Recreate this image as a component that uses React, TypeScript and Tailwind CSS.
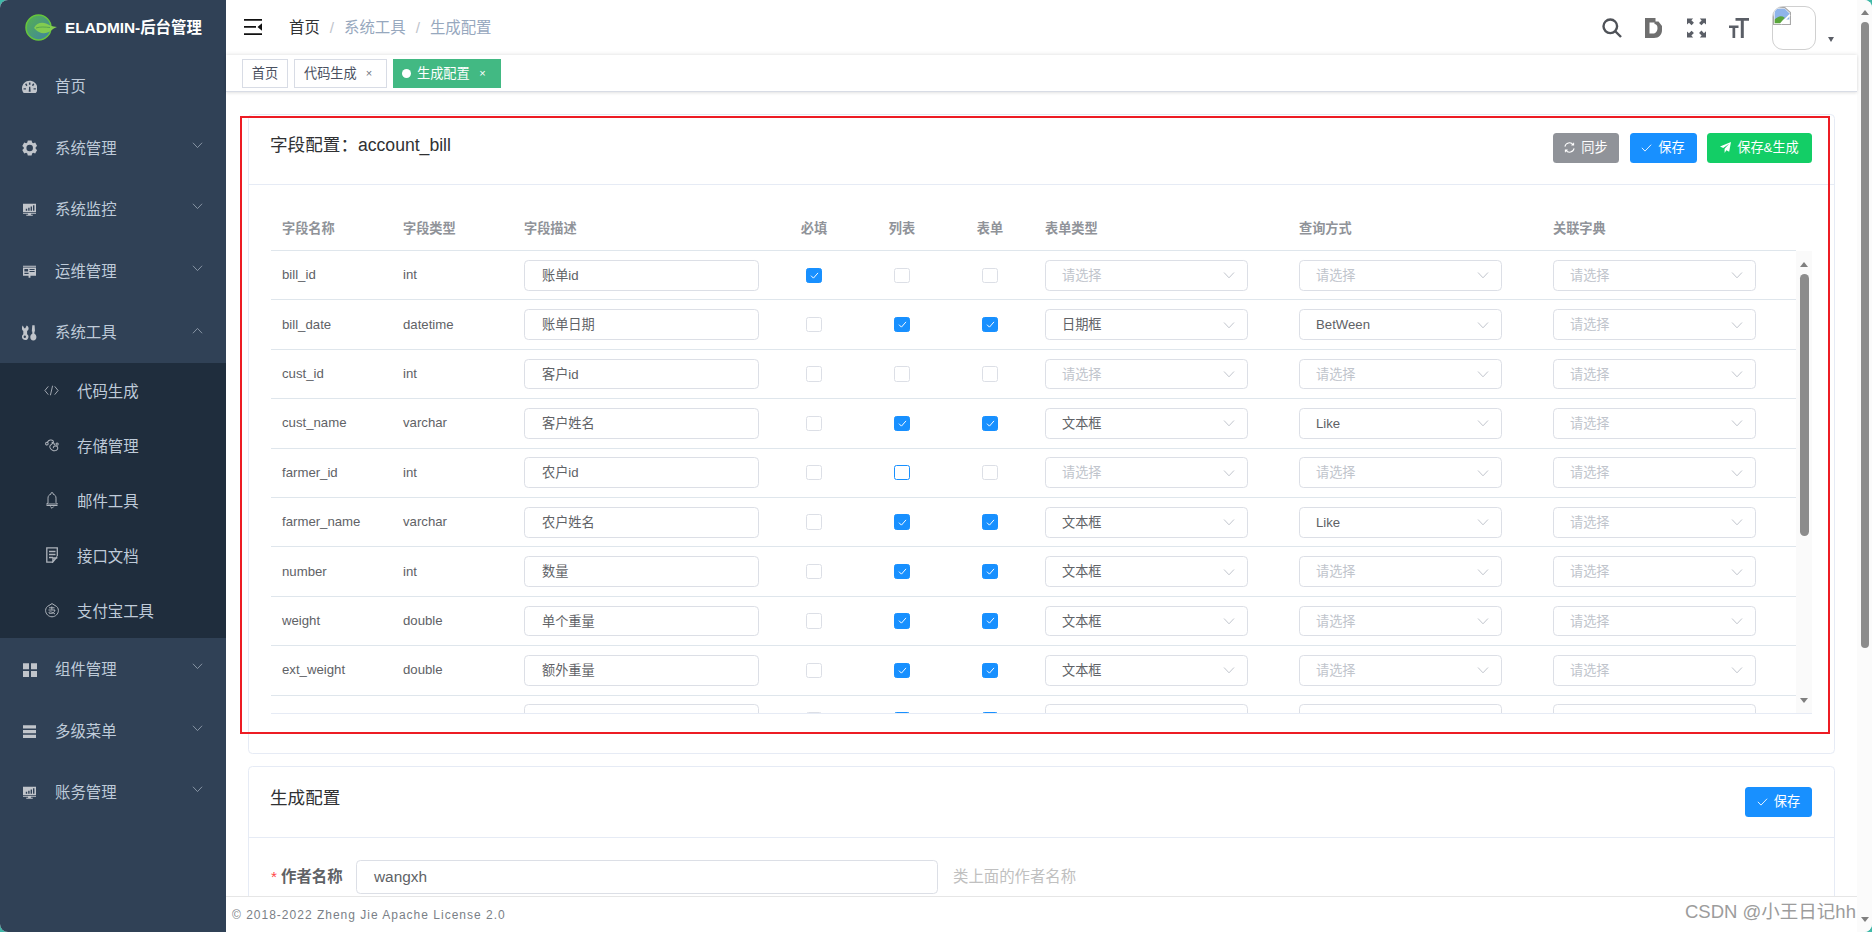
import React from 'react';

interface Field {
  name: string;
  type: string;
  desc: string;
  required?: boolean;
  list?: boolean;
  form?: boolean;
  focus?: boolean;
  formType?: string;
  query?: string;
}

const fields: Field[] = [
  { name: 'bill_id', type: 'int', desc: '账单id', required: true },
  { name: 'bill_date', type: 'datetime', desc: '账单日期', list: true, form: true, formType: '日期框', query: 'BetWeen' },
  { name: 'cust_id', type: 'int', desc: '客户id' },
  { name: 'cust_name', type: 'varchar', desc: '客户姓名', list: true, form: true, formType: '文本框', query: 'Like' },
  { name: 'farmer_id', type: 'int', desc: '农户id', focus: true },
  { name: 'farmer_name', type: 'varchar', desc: '农户姓名', list: true, form: true, formType: '文本框', query: 'Like' },
  { name: 'number', type: 'int', desc: '数量', list: true, form: true, formType: '文本框' },
  { name: 'weight', type: 'double', desc: '单个重量', list: true, form: true, formType: '文本框' },
  { name: 'ext_weight', type: 'double', desc: '额外重量', list: true, form: true, formType: '文本框' },
  // last row is cut by the scroll area, only the top of its controls shows
  { name: '', type: '', desc: '', list: true, form: true, formType: ' ', query: ' ' },
];

const Chevron = ({ up = false, className = '' }: { up?: boolean; className?: string }) => (
  <svg viewBox="0 0 12 7" fill="none" stroke="currentColor" strokeWidth="1" className={className}>
    <path d={up ? 'M1 6.5 6 1.2l5 5.3' : 'M1 .5l5 5.3L11 .5'} />
  </svg>
);

const IconDashboard = () => (
  <svg viewBox="0 0 16 14" className="w-[15.4px] h-[14px]" fill="currentColor">
    <path fillRule="evenodd" d="M8 .5C3.6.5 0 4 0 8.4c0 1.9.6 3.6 1.5 4.6.2.2.4.3.7.3h11.6c.3 0 .5-.1.7-.3 1-1 1.5-2.7 1.5-4.6C16 4 12.4.5 8 .5zM7.2 2.2h1.6v2.4H7.2zM3.2 4.2l1.2-1 1.3 1.9-1.2 1zM1.6 8.2h2.5v1.5H1.6zM12 8.2h2.4v1.5H12zM7 12l.4-5.2h1.2L9 12zM10.3 5.1l1.3-1.9 1.2 1-1.3 1.9z" />
  </svg>
);
const IconGear = () => (
  <svg viewBox="0 0 16 16" className="w-[15.4px] h-[16px]" fill="currentColor">
    <path fillRule="evenodd" d="M6 .3h4l.5 2 1.2.7 2-.6 2 3.4-1.5 1.5v1.4l1.5 1.5-2 3.4-2-.6-1.2.7-.5 2H6l-.5-2-1.2-.7-2 .6-2-3.4 1.5-1.5V7.2L.3 5.8l2-3.4 2 .6L5.500 2.300zM8 4.600a3.400 3.400 0 1 0 0 6.800 3.400 3.400 0 0 0 0-6.800z" />
  </svg>
);
const IconMonitor = () => (
  <svg viewBox="0 0 14 14" className="w-[13px] h-[13.500px]" fill="currentColor">
    <path fillRule="evenodd" d="M0 .5h14v9.300H0zM3 6h1.500v2H3zM5.600 4.800h1.500V8H5.600zM8.200 3.500h1.500V8H8.200zM10.800 2.200h1.500V8h-1.500z" />
    <path d="M0 10.500h14v.7H0zM5.500 11.200h3v1.200h-3zM3.500 12.500h7v1h-7z" />
  </svg>
);
const IconConsole = () => (
  <svg viewBox="0 0 14 14" className="w-[13px] h-[13.500px]" fill="currentColor">
    <path fillRule="evenodd" d="M0 .5h14v1H0zM0 2.500h14v8.700H8v2.300H6v-2.300H0zM1.500 4v2.800h4V4zM7 4v1h5.500V4zM7 6.200v1h5.500v-1zM1.500 8v1.500H6V8z" />
  </svg>
);
const IconTools = () => (
  <svg viewBox="0 0 15 16" className="w-[15px] h-[16px]" fill="currentColor">
    <path d="M.8.500 2.200 3.200 3.300 3.200 4.700.500c1.200.7 1.900 1.800 1.900 3 0 1.100-.6 2-1.500 2.500v3.200c.9.500 1.400 1.400 1.400 2.500 0 1.900-1.500 3.400-3.300 3.400S-.1 13.600-.1 11.700c0-1.100.6-2 1.400-2.500V6C.4 5.500-.1 4.600-.1 3.500c0-1.200.3-2.300.9-3zM2.800 10.600a1.200 1.200 0 1 0 0 2.400 1.200 1.200 0 0 0 0-2.400z" />
    <path d="M10.300.300h2.300l.4 6.200h-.6v2.200c1.200.6 2 1.800 2 3.200 0 2.100-1.200 3.600-3.100 3.600s-3-1.500-3-3.600c0-1.400.8-2.600 2-3.200V6.500h-.5z" />
  </svg>
);
const IconComponents = () => (
  <svg viewBox="0 0 14 14" className="w-[14px] h-[14px]" fill="currentColor">
    <path d="M0 .3h6v6H0zM8 .3h6v6H8zM0 8h6v6H0zM8 8h6v6H8z" />
  </svg>
);
const IconMenu = () => (
  <svg viewBox="0 0 14 14" className="w-[13px] h-[13.500px]" fill="currentColor">
    <path d="M0 0h14v3.400H0zM0 5.100h14v3.400H0zM0 10.200h14v3.400H0z" />
  </svg>
);
const IconCode = () => (
  <svg viewBox="0 0 16 12" className="w-[15px] h-[11px]" fill="none" stroke="currentColor" strokeWidth="1">
    <path d="M4.500 1.500.8 6l3.700 4.500M11.500 1.500 15.200 6l-3.700 4.500M9.200.8 6.800 11.200" />
  </svg>
);
const IconStorage = () => (
  <svg viewBox="0 0 15 14" className="w-[14px] h-[13px]" fill="none" stroke="currentColor" strokeWidth="1.100">
    <path d="M2.500 3.500C4 1 7 .3 8.500 1.800S8 5 6.500 6 4.500 8.500 6 10.500s4.500 3 6.500 1.500 1.500-4-.5-4.500-3.500 1-3 2.500" />
    <path d="M7 3.500c1.500 0 3 1 3.200 3" />
    <circle cx="2" cy="5" r="1.400" />
    <circle cx="13" cy="5.500" r="1.200" />
  </svg>
);
const IconBell = () => (
  <svg viewBox="0 0 12 17" className="w-[12px] h-[17px]" fill="none" stroke="currentColor" strokeWidth="1">
    <path d="M6 .5a1 1 0 0 1 1 1v.6c1.900.5 3 2 3 4v4.400l1.500 1.500H.5L2 11.100V6.100c0-2 1.100-3.500 3-4v-.6a1 1 0 0 1 1-1zM.5 13.500h11M4.200 14.500 6 16.300l1.800-1.800" />
  </svg>
);
const IconDoc = () => (
  <svg viewBox="0 0 12 16" className="w-[12px] h-[16px]" fill="none" stroke="currentColor" strokeWidth="1.300">
    <path d="M11.300 9V.8H.8v14.400h5.500M3 4.500h6.500M3 7.500h6.500M3 10.500h4M11.300 9.500 6.800 15l.2-4h4.300" />
  </svg>
);
const IconAlipay = () => (
  <svg viewBox="0 0 14 15" className="w-[14px] h-[15px]" fill="none" stroke="currentColor" strokeWidth="1">
    <path d="M7 .6 10 2.500c2.200.9 3.400 2.800 3.400 5 0 3.300-2.900 6.300-6.400 6.300S.6 10.800.6 7.500c0-2.200 1.200-4.100 3.400-5z" />
    <path d="M4 4.800h5.500M6.800 3.500v3.200M3.500 7h6.500c-.5 2-2 3.500-3.500 3.500S3.500 10.500 4 9.500s2.500-1 6 1.500" />
  </svg>
);

const MenuItem = ({
  icon,
  label,
  arrow,
  up,
}: {
  icon: React.ReactNode;
  label: string;
  arrow?: boolean;
  up?: boolean;
}) => (
  <div className="flex items-center h-[61.6px] pt-[2px] pl-[22px] text-[15.4px] text-[#bfcbd9]">
    <span className="w-[15.4px] flex justify-center text-[#c1c5cb] shrink-0">{icon}</span>
    <span className="ml-[17.6px] leading-none">{label}</span>
    {arrow && <Chevron up={up} className="w-[11px] h-[7px] ml-auto mr-[23px] -translate-y-[3px] text-[#8e9bab]" />}
  </div>
);

const SubItem = ({ icon, label }: { icon: React.ReactNode; label: string }) => (
  <div className="flex items-center h-[55px] pt-[2px] pl-[44px] text-[15.4px] text-[#bfcbd9]">
    <span className="w-[15px] flex justify-center text-[#aeb4bc] shrink-0 -translate-y-[1px]">{icon}</span>
    <span className="ml-[18px] leading-none">{label}</span>
  </div>
);

const Sidebar = () => (
  <aside className="w-[226px] shrink-0 bg-[#304156]">
    <div className="h-[55px] flex items-center pl-[25px]">
      <svg viewBox="0 0 32 27" className="w-[32px] h-[27px] shrink-0">
        <defs>
          <linearGradient id="logoFill" x1="0" y1="0" x2="1" y2="1">
            <stop offset="0" stopColor="#55b44a" />
            <stop offset="1" stopColor="#3f7fa8" />
          </linearGradient>
        </defs>
        <circle cx="13.500" cy="13.500" r="12.500" fill="url(#logoFill)" stroke="#66c63c" strokeWidth="1.500" />
        <path d="M9 14c2-5 8-6.500 12-4.500 3 1.500 6 3 11 3.500-2.500 1-4 2-6 3.500-3.500 3-8.500 3.500-12 1.500-2-1-3.500-2.500-5-4z" fill="#82cc50" />
        <path d="M11 14c4-1.500 9-1 14-.5" stroke="#4a9a4f" strokeWidth=".8" fill="none" />
      </svg>
      <span className="ml-[8px] text-[15.4px] font-semibold text-white whitespace-nowrap">ELADMIN-后台管理</span>
    </div>
    <MenuItem icon={<IconDashboard />} label="首页" />
    <MenuItem icon={<IconGear />} label="系统管理" arrow />
    <MenuItem icon={<IconMonitor />} label="系统监控" arrow />
    <MenuItem icon={<IconConsole />} label="运维管理" arrow />
    <MenuItem icon={<IconTools />} label="系统工具" arrow up />
    <div className="bg-[#1f2d3d]">
      <SubItem icon={<IconCode />} label="代码生成" />
      <SubItem icon={<IconStorage />} label="存储管理" />
      <SubItem icon={<IconBell />} label="邮件工具" />
      <SubItem icon={<IconDoc />} label="接口文档" />
      <SubItem icon={<IconAlipay />} label="支付宝工具" />
    </div>
    <MenuItem icon={<IconComponents />} label="组件管理" arrow />
    <MenuItem icon={<IconMenu />} label="多级菜单" arrow />
    <MenuItem icon={<IconMonitor />} label="账务管理" arrow />
  </aside>
);

const Navbar = () => (
  <header className="h-[55px] shrink-0 flex items-center text-[#5a5e66] bg-white">
    <svg viewBox="0 0 18 16" className="w-[18px] h-[16px] ml-[18px] -translate-y-[1px] text-[#111]" fill="currentColor">
      <path d="M0 0h18v1.700H0zM0 7.100h12v1.700H0zM0 14.300h18V16H0zM18 4.300v7.400L13.500 8z" />
    </svg>
    <nav className="ml-[27px] flex items-center text-[15.4px] leading-none">
      <span className="text-[#303133]">首页</span>
      <span className="mx-[10px] text-[#c0c4cc]">/</span>
      <span className="text-[#97a8be]">系统工具</span>
      <span className="mx-[10px] text-[#c0c4cc]">/</span>
      <span className="text-[#97a8be]">生成配置</span>
    </nav>
    <div className="ml-auto flex items-center mr-[23px]">
      <svg viewBox="0 0 20 20" className="w-[20px] h-[20px]" fill="none" stroke="#4f5258" strokeWidth="2.400">
        <circle cx="8.300" cy="8.300" r="6.800" />
        <path d="m13.500 13.500 5.500 5.500" />
      </svg>
      <svg viewBox="0 0 17 20" className="w-[17px] h-[20px] ml-[23px]" fill="#6f6f6f">
        <path fillRule="evenodd" d="M0 0h10.500v3.500h3l3.500 4.500v4c0 4.500-3 8-8 8H0zM4.500 4.500v11H8c2.500 0 4.500-2 4.500-5.500 0-3-1.500-4-3-4V4.500z" />
      </svg>
      <svg viewBox="0 0 20 20" className="w-[19px] h-[20px] ml-[25px]" fill="#5a5e66">
        <path d="M0 0h6.500L4.600 1.900l2.700 2.700-2.500 2.500-2.700-2.700L0 6.400zM20 0v6.400l-2.100-1.900-2.700 2.700-2.500-2.500 2.700-2.700L13.500 0zM0 20v-6.400l2.100 1.900 2.700-2.700 2.500 2.500-2.700 2.700L6.500 20zM20 20h-6.500l1.900-2.100-2.700-2.700 2.500-2.500 2.700 2.700 2.100-1.900z" />
      </svg>
      <svg viewBox="0 0 20 20" className="w-[20px] h-[20px] ml-[23px]" fill="#5a5e66">
        <path d="M6.500 0H20v2.800h-5.200V20h-3V2.800H6.500zM0 7.500h9.500V10H6.200v10H3.500V10H0z" />
      </svg>
      <div className="relative w-[44px] h-[44px] ml-[23px] rounded-[11px] border border-[#d0d0d0] overflow-hidden">
        <svg viewBox="0 0 16 16" className="w-[18px] h-[18px]">
          <path d="M.5.500h10L15.500 5v10.500H.5z" fill="#fff" stroke="#a8a8a8" />
          <path d="M1.500 1.500h9l4 4V11H1.500z" fill="#8fb4ea" />
          <path d="M1.500 14.500V11c3-3 6-3.500 9-1.500l-4 5z" fill="#5aa63c" />
          <path d="M15 7 7 15" stroke="#fff" strokeWidth="1.500" />
        </svg>
      </div>
      <span className="w-0 h-0 ml-[12px] mt-[24px] border-x-[3.500px] border-x-transparent border-t-[5px] border-t-[#5a5e66]" />
    </div>
  </header>
);

const TagsView = () => (
  <div className="h-[37px] shrink-0 relative z-10 flex items-start pt-[4px] pl-[16px] gap-[5.500px] border-b border-[#d8dce5] shadow-[0_1px_3px_0_rgba(0,0,0,0.12),0_-2px_3px_0_rgba(0,0,0,0.05)] bg-white text-[13.2px] leading-none">
    <div className="h-[29px] w-[46px] flex items-center justify-center border border-[#d8dce5] text-[#495060]">首页</div>
    <div className="h-[29px] w-[93px] flex items-center pl-[9.500px] border border-[#d8dce5] text-[#495060]">
      代码生成
      <span className="ml-[9px] text-[11px] text-[#70757f]">×</span>
    </div>
    <div className="h-[29px] w-[108px] ml-[1px] flex items-center pl-[9px] bg-[#42b983] text-white">
      <span className="w-[9px] h-[9px] rounded-full bg-white mr-[6px]" />
      生成配置
      <span className="ml-[9.500px] text-[11px]">×</span>
    </div>
  </div>
);

const TextBox = ({ value }: { value: string }) => (
  <div className="w-[235px] h-[30.800px] flex items-center pl-[17px] pt-[1px] border border-[#dcdfe6] rounded-[4.400px] text-[13.2px] text-[#606266] bg-white">
    {value}
  </div>
);

const Select = ({ value }: { value?: string }) => (
  <div className="w-[203px] h-[30.800px] flex items-center pl-[16px] pt-[1px] pr-[12px] border border-[#dcdfe6] rounded-[4.400px] text-[13.2px] bg-white">
    <span className={value ? 'text-[#606266]' : 'text-[#c0c4cc]'}>{value || '请选择'}</span>
    <Chevron className="ml-auto w-[12px] h-[7px] text-[#c0c4cc]" />
  </div>
);

const CheckBox = ({ checked, focus }: { checked?: boolean; focus?: boolean }) => (
  <span
    className={`w-[16px] h-[15.400px] rounded-[2.500px] border flex items-center justify-center ${
      checked ? 'bg-[#1890ff] border-[#1890ff]' : focus ? 'bg-white border-[#1890ff]' : 'bg-white border-[#dcdfe6]'
    }`}
  >
    {checked && (
      <svg viewBox="0 0 10 8" className="w-[9px] h-[7px]" fill="none" stroke="#fff" strokeWidth="1.100">
        <path d="M1 4.200 3.800 7 9 1" />
      </svg>
    )}
  </span>
);

const COLS = 'grid grid-cols-[121px_121px_257px_88px_88px_88px_254px_254px_255px] items-center';

const FieldRow = ({ f }: { f: Field }) => (
  <div className={`${COLS} h-[49.400px] shrink-0 border-b border-[#dfe6ec] text-[13.2px] text-[#606266]`}>
    <span className="pl-[11px]">{f.name}</span>
    <span className="pl-[11px]">{f.type}</span>
    <div className="pl-[11px]"><TextBox value={f.desc} /></div>
    <div className="flex justify-center"><CheckBox checked={f.required} /></div>
    <div className="flex justify-center"><CheckBox checked={f.list} focus={f.focus} /></div>
    <div className="flex justify-center"><CheckBox checked={f.form} /></div>
    <div className="pl-[11px]"><Select value={f.formType} /></div>
    <div className="pl-[11px]"><Select value={f.query} /></div>
    <div className="pl-[11px]"><Select value={f.name ? undefined : ' '} /></div>
  </div>
);

const FieldTable = () => (
  <div className="w-[1541px]">
    <div className={`${COLS} w-[1525px] h-[44px] border-b border-[#dfe6ec] text-[13.2px] font-semibold text-[#909399]`}>
      <span className="pl-[11px]">字段名称</span>
      <span className="pl-[11px]">字段类型</span>
      <span className="pl-[11px]">字段描述</span>
      <span className="text-center">必填</span>
      <span className="text-center">列表</span>
      <span className="text-center">表单</span>
      <span className="pl-[11px]">表单类型</span>
      <span className="pl-[11px]">查询方式</span>
      <span className="pl-[11px]">关联字典</span>
    </div>
    <div className="h-[463px] flex border-b border-[#e6ebf5] overflow-hidden">
      <div className="w-[1525px] shrink-0">
        {fields.map((f, i) => (
          <FieldRow key={i} f={f} />
        ))}
      </div>
      <div className="w-[16px] shrink-0 bg-[#fafafa] flex flex-col items-center pt-[11px] pb-[10px]">
        <span className="w-0 h-0 border-x-[4px] border-x-transparent border-b-[5px] border-b-[#7f7f7f]" />
        <span className="w-[9px] h-[262px] mt-[7px] rounded-full bg-[#8c8c8c]" />
        <span className="w-0 h-0 mt-auto border-x-[4px] border-x-transparent border-t-[5px] border-t-[#7f7f7f]" />
      </div>
    </div>
  </div>
);

const Button = ({
  icon,
  label,
  color,
  width,
}: {
  icon: React.ReactNode;
  label: string;
  color: string;
  width: string;
}) => (
  <div className={`h-[30px] rounded-[3.500px] flex items-center justify-center gap-[6px] text-[13.2px] leading-none text-white ${color} ${width}`}>
    {icon}
    {label}
  </div>
);

const CheckIcon = () => (
  <svg viewBox="0 0 12 9" className="w-[11px] h-[8px]" fill="none" stroke="#fff" strokeWidth="1">
    <path d="M.8 4.300 4.300 8 11.200 .8" />
  </svg>
);
const RefreshIcon = () => (
  <svg viewBox="0 0 12 12" className="w-[11px] h-[11px]" fill="none" stroke="#fff" strokeWidth="1.100">
    <path d="M1 5A5 5 0 0 1 10 3M11 7A5 5 0 0 1 2 9M10.500 .8V3.300H8M1.500 11.200V8.700H4" />
  </svg>
);
const SendIcon = () => (
  <svg viewBox="0 0 12 12" className="w-[11px] h-[11px]" fill="#fff">
    <path d="M12 0 0 5l3.500 1.600L10 2 5 7.400V12l2-3 3 1.500z" />
  </svg>
);

const FieldCard = () => (
  <section className="h-[640px] shrink-0 border border-[#e6ebf5] rounded-[4.400px] bg-white">
    <div className="h-[70px] flex items-center justify-between pl-[21px] pr-[22px] border-b border-[#e6ebf5]">
      <span className="text-[17.6px] leading-none text-[#303133] -translate-y-[4px]">字段配置：account_bill</span>
      <div className="flex gap-[10.500px] -translate-y-[2px]">
        <Button icon={<RefreshIcon />} label="同步" color="bg-[#909399]" width="w-[66px]" />
        <Button icon={<CheckIcon />} label="保存" color="bg-[#1890ff]" width="w-[67px]" />
        <Button icon={<SendIcon />} label="保存&生成" color="bg-[#13ce66]" width="w-[105px]" />
      </div>
    </div>
    <div className="px-[22px] pt-[22px]">
      <FieldTable />
    </div>
  </section>
);

const GenCard = () => (
  <section className="mt-[12px] h-[300px] shrink-0 border border-[#e6ebf5] rounded-[4.400px] bg-white">
    <div className="h-[71px] flex items-center justify-between pl-[21px] pr-[22px] border-b border-[#e6ebf5]">
      <span className="text-[17.6px] leading-none text-[#303133] -translate-y-[3px]">生成配置</span>
      <Button icon={<CheckIcon />} label="保存" color="bg-[#1890ff]" width="w-[67px]" />
    </div>
    <div className="flex items-center pl-[22px] pt-[22px] text-[15.4px]">
      <span className="w-[10px] text-[#ff4949]">*</span>
      <span className="w-[75px] font-bold text-[#606266]">作者名称</span>
      <div className="w-[582px] h-[34px] flex items-center pl-[17px] border border-[#dcdfe6] rounded-[4.400px] text-[#606266]">wangxh</div>
      <span className="ml-[15px] text-[#c0c0c0]">类上面的作者名称</span>
    </div>
  </section>
);

export default function App() {
  return (
    <div className="relative w-[1872px] h-[932px] overflow-hidden bg-[#3fb8a8] font-['Liberation_Sans','Noto_Sans_CJK_SC',sans-serif]">
      <div className="w-full h-full flex rounded-[8px] overflow-hidden bg-white">
        <Sidebar />
        <div className="flex-1 min-w-0 flex flex-col">
          <Navbar />
          <TagsView />
          <main className="flex-1 min-h-0 overflow-hidden px-[22px] pt-[22px] flex flex-col">
            <FieldCard />
            <GenCard />
          </main>
          <footer className="h-[36px] shrink-0 flex items-center pl-[6px] border-t border-[#e6e6e6] bg-white text-[12px] tracking-[1px] text-[#7a7f87]">
            © 2018-2022 Zheng Jie Apache License 2.0
          </footer>
        </div>
        <div className="w-[15px] shrink-0 bg-[#fbfbfb] flex flex-col items-center pt-[10px] pb-[10px]">
          <span className="w-0 h-0 border-x-[4px] border-x-transparent border-b-[5px] border-b-[#7f7f7f]" />
          <span className="w-[8px] h-[626px] mt-[7px] rounded-full bg-[#8c8c8c]" />
          <span className="w-0 h-0 mt-auto border-x-[4px] border-x-transparent border-t-[5px] border-t-[#7f7f7f]" />
        </div>
      </div>
      {/* red annotation drawn over the screenshot */}
      <div className="absolute left-[240px] top-[116px] w-[1590px] h-[618px] border-2 border-[#ed1c24] pointer-events-none" />
      <div className="absolute left-[1685px] top-[899px] text-[18.500px] leading-[26px] text-[#9c9c9c] whitespace-nowrap">CSDN @小王日记hh</div>
    </div>
  );
}
